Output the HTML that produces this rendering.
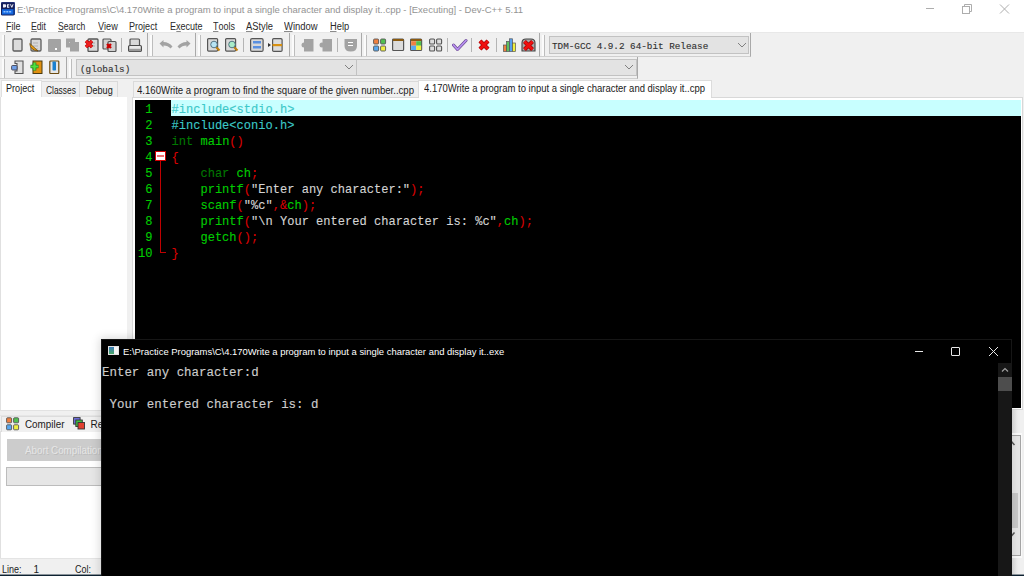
<!DOCTYPE html>
<html><head><meta charset="utf-8">
<style>
*{margin:0;padding:0;box-sizing:border-box}
html,body{width:1024px;height:576px;overflow:hidden;background:#f0f0f0;font-family:"Liberation Sans",sans-serif}
.a{position:absolute}
.t{position:absolute;white-space:pre;transform-origin:0 0}
.mono{font-family:"Liberation Mono",monospace}
#title{left:0;top:0;width:1024px;height:33px;background:#fff}
.menu{font-size:10px;color:#2a2a2a;top:20.8px}
.menu u{text-decoration:none;position:relative}.menu u::after{content:"";position:absolute;left:0;right:0;top:10.4px;height:1px;background:#8a8a8a}
.band{background:#f0f0f0;border-right:1px solid #c8c8c8;border-bottom:1px solid #d4d4d4}
.grip{width:2px;border-left:1px solid #c6c6c6;border-right:1px solid #fff}
.sep{width:1px;background:#c4c4c4}
.ico{position:absolute}
.code{font-family:"Liberation Mono",monospace;font-size:12.05px;line-height:16px;-webkit-text-stroke-width:0.12px}
.ln{position:absolute;left:134px;width:26px;text-align:right;color:#00d000;font-family:"Liberation Mono",monospace;font-size:12.2px}
.code div{height:16px;white-space:pre}
.kw{color:#007800}.g{color:#00cc00}.r{color:#d80000}.s{color:#d4d4d4}
.lnum{color:#00cc00}
.tab{font-size:10px;color:#1a1a1a}
</style></head><body>
<!-- title bar -->
<div id="title" class="a"></div>
<div class="a" style="left:1px;top:2px;width:14px;height:13px;background:linear-gradient(#2c3d8c 0,#2c3d8c 45%,#1060d0 45%,#0a50c0);border-radius:1px"></div>
<div class="t" style="left:17px;top:4px;font-size:9.5px;color:#939393">E:\Practice Programs\C\4.170Write a program to input a single character and display it..cpp - [Executing] - Dev-C++ 5.11</div>

<!-- MENU -->
<div class="t menu" style="left:5.50px;transform:scaleX(0.894)"><u>F</u>ile</div>
<div class="t menu" style="left:30.90px;transform:scaleX(0.867)"><u>E</u>dit</div>
<div class="t menu" style="left:58.10px;transform:scaleX(0.859)"><u>S</u>earch</div>
<div class="t menu" style="left:97.60px;transform:scaleX(0.909)"><u>V</u>iew</div>
<div class="t menu" style="left:128.60px;transform:scaleX(0.906)"><u>P</u>roject</div>
<div class="t menu" style="left:169.60px;transform:scaleX(0.903)">E<u>x</u>ecute</div>
<div class="t menu" style="left:213.10px;transform:scaleX(0.896)"><u>T</u>ools</div>
<div class="t menu" style="left:245.60px;transform:scaleX(0.931)"><u>A</u>Style</div>
<div class="t menu" style="left:283.60px;transform:scaleX(0.946)"><u>W</u>indow</div>
<div class="t menu" style="left:330.10px;transform:scaleX(0.929)"><u>H</u>elp</div>
<!-- /MENU -->

<!-- TB -->
<div class="a" style="left:0;top:32px;width:1024px;height:1px;background:#e8e8e8"></div>
<div class="a" style="left:0px;top:33px;width:148px;height:24px;border-right:1px solid #a9a9a9;border-bottom:1px solid #cfcfcf"></div><div class="a" style="left:2px;top:35px;width:2px;height:21px;background:#fbfbfb"></div><div class="a" style="left:4px;top:35px;width:1px;height:21px;background:#bdbdbd"></div>
<div class="a" style="left:148px;top:33px;width:48px;height:24px;border-right:1px solid #a9a9a9;border-bottom:1px solid #cfcfcf"></div><div class="a" style="left:150px;top:35px;width:2px;height:21px;background:#fbfbfb"></div><div class="a" style="left:152px;top:35px;width:1px;height:21px;background:#bdbdbd"></div>
<div class="a" style="left:196px;top:33px;width:94px;height:24px;border-right:1px solid #a9a9a9;border-bottom:1px solid #cfcfcf"></div><div class="a" style="left:198px;top:35px;width:2px;height:21px;background:#fbfbfb"></div><div class="a" style="left:200px;top:35px;width:1px;height:21px;background:#bdbdbd"></div>
<div class="a" style="left:290px;top:33px;width:72px;height:24px;border-right:1px solid #a9a9a9;border-bottom:1px solid #cfcfcf"></div><div class="a" style="left:292px;top:35px;width:2px;height:21px;background:#fbfbfb"></div><div class="a" style="left:294px;top:35px;width:1px;height:21px;background:#bdbdbd"></div>
<div class="a" style="left:362px;top:33px;width:178px;height:24px;border-right:1px solid #a9a9a9;border-bottom:1px solid #cfcfcf"></div><div class="a" style="left:364px;top:35px;width:2px;height:21px;background:#fbfbfb"></div><div class="a" style="left:366px;top:35px;width:1px;height:21px;background:#bdbdbd"></div>
<div class="a" style="left:540px;top:33px;width:211px;height:24px;border-right:1px solid #a9a9a9;border-bottom:1px solid #cfcfcf"></div><div class="a" style="left:542px;top:35px;width:2px;height:21px;background:#fbfbfb"></div><div class="a" style="left:544px;top:35px;width:1px;height:21px;background:#bdbdbd"></div>
<div class="a" style="left:0px;top:57px;width:67px;height:22px;border-right:1px solid #a9a9a9;border-bottom:1px solid #cfcfcf"></div><div class="a" style="left:2px;top:59px;width:2px;height:19px;background:#fbfbfb"></div><div class="a" style="left:4px;top:59px;width:1px;height:19px;background:#bdbdbd"></div>
<div class="a" style="left:67px;top:57px;width:571px;height:22px;border-right:1px solid #a9a9a9;border-bottom:1px solid #cfcfcf"></div><div class="a" style="left:69px;top:59px;width:2px;height:19px;background:#fbfbfb"></div><div class="a" style="left:71px;top:59px;width:1px;height:19px;background:#bdbdbd"></div>
<div class="a" style="left:121px;top:38px;width:1px;height:14px;background:#b4b4b4"></div>
<div class="a" style="left:243px;top:38px;width:1px;height:14px;background:#b4b4b4"></div>
<div class="a" style="left:337px;top:38px;width:1px;height:14px;background:#b4b4b4"></div>
<div class="a" style="left:447px;top:38px;width:1px;height:14px;background:#b4b4b4"></div>
<div class="a" style="left:471px;top:38px;width:1px;height:14px;background:#b4b4b4"></div>
<div class="a" style="left:496px;top:38px;width:1px;height:14px;background:#b4b4b4"></div>
<svg class="a" style="left:12px;top:38px" width="11" height="14" viewBox="0 0 11 14"><rect x="1" y="1" width="9" height="12" rx="1.2" fill="#dcdcdc" stroke="#5c5c5c" stroke-width="1.3"/></svg>
<svg class="a" style="left:29px;top:38px" width="13" height="14" viewBox="0 0 13 14"><rect x="2" y="1" width="10" height="12" rx="1.2" fill="#d8d8d8" stroke="#5c5c5c" stroke-width="1.3"/><path d="M3 11h6M4 5h5M4 8h5" stroke="#b0b0b0"/><path d="M0.8 5.5 Q1 12 9 13 Z" fill="#f0a010" stroke="#6a4a10" stroke-width="0.8"/></svg>
<svg class="a" style="left:48px;top:38px" width="14" height="14" viewBox="0 0 14 14"><rect x="0" y="1" width="13" height="13" rx="1" fill="#a3a3a3"/><rect x="7" y="10" width="2" height="2" fill="#fff"/></svg>
<svg class="a" style="left:66px;top:38px" width="14" height="14" viewBox="0 0 14 14"><rect x="0" y="0.5" width="9" height="9" fill="#a3a3a3"/><rect x="4" y="4" width="9" height="9.5" fill="#a3a3a3"/><rect x="3" y="4" width="1" height="1" fill="#ccc"/></svg>
<svg class="a" style="left:84px;top:38px" width="15" height="14" viewBox="0 0 15 14"><rect x="4" y="1" width="10" height="12.5" rx="1" fill="#d8d8d8" stroke="#555" stroke-width="1.3"/><path d="M6 5h5M6 8h5" stroke="#aaa"/><path d="M2 3 L8 9 M8 3 L2 9" stroke="#b00" stroke-width="3.4"/><path d="M2 3 L8 9 M8 3 L2 9" stroke="#f02020" stroke-width="2.2"/></svg>
<svg class="a" style="left:102px;top:38px" width="15" height="14" viewBox="0 0 15 14"><rect x="1" y="1" width="8" height="10" rx="1" fill="#d0d0d0" stroke="#555" stroke-width="1.2"/><rect x="6" y="3.5" width="8" height="10" rx="1" fill="#d0d0d0" stroke="#555" stroke-width="1.2"/><path d="M5 6 L9 10 M9 6 L5 10" stroke="#c00" stroke-width="2.4"/></svg>
<svg class="a" style="left:128px;top:38px" width="14" height="14" viewBox="0 0 14 14"><rect x="2" y="1" width="9.5" height="7" rx="1" fill="#d8d8d8" stroke="#555" stroke-width="1.2"/><rect x="0.6" y="7.5" width="12.8" height="6" rx="1.2" fill="#e8e8e8" stroke="#4a4a4a" stroke-width="1.2"/><rect x="1" y="10.8" width="12" height="2.4" fill="#999"/></svg>
<svg class="a" style="left:159px;top:40px" width="14" height="10" viewBox="0 0 14 10"><path d="M0.5 3.5 L4.5 0 L4.5 2 Q10 2 13.5 6.5 L11.5 8.5 Q9 5.5 4.5 5.5 L4.5 7.5 Z" fill="#a3a3a3"/></svg>
<svg class="a" style="left:177px;top:40px" width="14" height="10" viewBox="0 0 14 10"><path d="M13.5 3.5 L9.5 0 L9.5 2 Q4 2 0.5 6.5 L2.5 8.5 Q5 5.5 9.5 5.5 L9.5 7.5 Z" fill="#a3a3a3"/></svg>
<svg class="a" style="left:207px;top:38px" width="14" height="14" viewBox="0 0 14 14"><rect x="0.6" y="0.6" width="10" height="12.5" rx="1" fill="#dadada" stroke="#555" stroke-width="1.2"/><path d="M9 9 L12.5 12.5" stroke="#c08010" stroke-width="2.2"/><circle cx="7" cy="6.5" r="3.3" fill="#b8e4f4" stroke="#4a6a7a" stroke-width="0.9"/></svg>
<svg class="a" style="left:225px;top:38px" width="14" height="14" viewBox="0 0 14 14"><rect x="0.6" y="0.6" width="10" height="12.5" rx="1" fill="#dadada" stroke="#555" stroke-width="1.2"/><path d="M9 9 L12.5 12.5" stroke="#c08010" stroke-width="2.2"/><circle cx="7" cy="6.5" r="3.3" fill="#a8ecc8" stroke="#4a6a7a" stroke-width="0.9"/></svg>
<svg class="a" style="left:250px;top:38px" width="14" height="14" viewBox="0 0 14 14"><rect x="0.6" y="0.6" width="12.5" height="12.8" rx="1.5" fill="#d8d8d8" stroke="#555" stroke-width="1.2"/><rect x="3" y="3" width="8" height="2.5" fill="#5a90e0"/><rect x="3" y="8" width="8" height="2.5" fill="#5a90e0"/></svg>
<svg class="a" style="left:268px;top:38px" width="15" height="14" viewBox="0 0 15 14"><rect x="4.6" y="0.6" width="9.5" height="12.8" rx="1.2" fill="#dcdcdc" stroke="#555" stroke-width="1.2"/><rect x="4.5" y="6" width="9.5" height="2.2" fill="#d89010"/><path d="M0 5 L3 7 L0 9 Z" fill="#333"/></svg>
<svg class="a" style="left:301px;top:38px" width="14" height="14" viewBox="0 0 14 14"><rect x="3" y="1" width="9.5" height="12.5" fill="#a3a3a3"/><circle cx="3" cy="7" r="2.5" fill="#a3a3a3"/></svg>
<svg class="a" style="left:319px;top:38px" width="14" height="14" viewBox="0 0 14 14"><rect x="3.5" y="1" width="9.5" height="12.5" fill="#a3a3a3"/><circle cx="3" cy="7" r="2.5" fill="#a3a3a3"/></svg>
<svg class="a" style="left:344px;top:38px" width="14" height="14" viewBox="0 0 14 14"><path d="M0.5 1 H13 V8 Q13 13.5 6.75 13.5 Q0.5 13.5 0.5 8 Z" fill="#a3a3a3"/><rect x="4" y="4" width="5" height="1" fill="#fff"/><rect x="4" y="7" width="5" height="1" fill="#fff"/></svg>
<svg class="a" style="left:373px;top:38px" width="14" height="14" viewBox="0 0 14 14"><rect x="0.6" y="1" width="5" height="5" rx="1" fill="#f08040" stroke="#555" stroke-width="0.9"/><rect x="7.6" y="1" width="5" height="5" rx="1" fill="#50c050" stroke="#555" stroke-width="0.9"/><rect x="0.6" y="8" width="5" height="5" rx="1" fill="#58a8f0" stroke="#555" stroke-width="0.9"/><rect x="7.6" y="8" width="5" height="5" rx="1" fill="#f0f040" stroke="#555" stroke-width="0.9"/></svg>
<svg class="a" style="left:392px;top:38px" width="13" height="14" viewBox="0 0 13 14"><rect x="0.6" y="1" width="11" height="11.5" rx="1" fill="#dcdcdc" stroke="#555" stroke-width="1.2"/><rect x="1" y="1" width="10.5" height="2" fill="#8a5a10"/></svg>
<svg class="a" style="left:410px;top:38px" width="13" height="14" viewBox="0 0 13 14"><rect x="0.6" y="1" width="11" height="11.5" rx="1" fill="#dcdcdc" stroke="#555" stroke-width="1.2"/><rect x="1" y="1" width="10.5" height="2" fill="#8a5a10"/><rect x="1.2" y="3.2" width="5" height="4.5" fill="#f08040"/><rect x="6.2" y="3.2" width="5" height="4.5" fill="#50c050"/><rect x="1.2" y="7.7" width="5" height="4.3" fill="#58a8f0"/><rect x="6.2" y="7.7" width="5" height="4.3" fill="#f0f040"/></svg>
<svg class="a" style="left:429px;top:38px" width="14" height="14" viewBox="0 0 14 14"><rect x="0.6" y="1" width="5" height="5" rx="1" fill="#ddd" stroke="#555" stroke-width="1.1"/><rect x="7.6" y="1" width="5" height="5" rx="1" fill="#ddd" stroke="#555" stroke-width="1.1"/><rect x="0.6" y="8" width="5" height="5" rx="1" fill="#ddd" stroke="#555" stroke-width="1.1"/><rect x="7.6" y="8" width="5" height="5" rx="1" fill="#ddd" stroke="#555" stroke-width="1.1"/></svg>
<svg class="a" style="left:452px;top:38px" width="16" height="14" viewBox="0 0 16 14"><path d="M1.5 7 L5.5 11.5 L14 2.5" stroke="#6a4a90" stroke-width="3" fill="none" stroke-linejoin="round" stroke-linecap="round"/><path d="M1.5 7 L5.5 11.5 L14 2.5" stroke="#b890f0" stroke-width="1.8" fill="none" stroke-linejoin="round" stroke-linecap="round"/></svg>
<svg class="a" style="left:477px;top:38px" width="14" height="14" viewBox="0 0 14 14"><path d="M3 3 L11 11 M11 3 L3 11" stroke="#900" stroke-width="4.2"/><path d="M3 3 L11 11 M11 3 L3 11" stroke="#f01010" stroke-width="3"/></svg>
<svg class="a" style="left:503px;top:38px" width="14" height="14" viewBox="0 0 14 14"><rect x="0.5" y="7" width="3" height="6.5" fill="#f08040" stroke="#555" stroke-width="0.7"/><rect x="3.5" y="3.5" width="3" height="10" fill="#60c060" stroke="#555" stroke-width="0.7"/><rect x="6.5" y="0.8" width="3" height="12.7" fill="#58a0f0" stroke="#555" stroke-width="0.7"/><rect x="9.5" y="5" width="3" height="8.5" fill="#f0f040" stroke="#555" stroke-width="0.7"/></svg>
<svg class="a" style="left:521px;top:38px" width="15" height="14" viewBox="0 0 15 14"><path d="M1 13 V5 Q1 1 5 1 H10 Q14 1 14 5 V13 Z" fill="#aaa" stroke="#444" stroke-width="1.1"/><path d="M3.5 3.5 L11.5 11.5 M11.5 3.5 L3.5 11.5" stroke="#900" stroke-width="4"/><path d="M3.5 3.5 L11.5 11.5 M11.5 3.5 L3.5 11.5" stroke="#f01010" stroke-width="2.8"/></svg>
<div class="a" style="left:549px;top:36px;width:200px;height:18px;background:#e3e3e3;border:1px solid #c2c2c2"></div>
<div class="t mono" id="tdm" style="left:552px;top:41px;font-size:9.3px;font-weight:normal;color:#2a2a2a;-webkit-text-stroke:0.15px #555">TDM-GCC 4.9.2 64-bit Release</div>
<svg class="a" style="left:737px;top:42px" width="10" height="6" viewBox="0 0 10 6"><path d="M1 1 L5 5 L9 1" stroke="#808080" stroke-width="1" fill="none"/></svg>
<svg class="a" style="left:11px;top:60px" width="13" height="14" viewBox="0 0 13 14"><path d="M4 1 H12 V13.5 H4 V11 H6 V3.5 H4 Z" fill="#e0e0e0" stroke="#555" stroke-width="1.1"/><rect x="0.6" y="5.5" width="5.5" height="4.5" rx="1" fill="#70a0e8" stroke="#445" stroke-width="0.9"/></svg>
<svg class="a" style="left:29px;top:60px" width="14" height="14" viewBox="0 0 14 14"><rect x="4" y="1" width="9" height="12.5" fill="#e09010" stroke="#4a3a10" stroke-width="1"/><path d="M5.5 2.5 V10.5 M1.5 6.5 H9.5" stroke="#208020" stroke-width="3.6"/><path d="M5.5 2.8 V10.2 M1.8 6.5 H9.2" stroke="#50e040" stroke-width="2.2"/></svg>
<svg class="a" style="left:49px;top:60px" width="11" height="14" viewBox="0 0 11 14"><rect x="0.8" y="1" width="9" height="12.5" rx="0.8" fill="#e6e6e6" stroke="#6a4a10" stroke-width="1.2"/><rect x="3.5" y="1.5" width="3.5" height="9" rx="0.8" fill="#1a80d0"/></svg>
<div class="a" style="left:76px;top:59px;width:281px;height:17px;background:#e3e3e3;border:1px solid #c2c2c2"></div>
<div class="t mono" id="glob" style="left:80px;top:63.5px;font-size:9.3px;font-weight:normal;color:#2a2a2a;-webkit-text-stroke:0.15px #555">(globals)</div>
<svg class="a" style="left:344px;top:64px" width="10" height="6" viewBox="0 0 10 6"><path d="M1 1 L5 5 L9 1" stroke="#808080" stroke-width="1" fill="none"/></svg>
<div class="a" style="left:356px;top:59px;width:281px;height:17px;background:#e3e3e3;border:1px solid #c2c2c2"></div>
<svg class="a" style="left:624px;top:64px" width="10" height="6" viewBox="0 0 10 6"><path d="M1 1 L5 5 L9 1" stroke="#808080" stroke-width="1" fill="none"/></svg>
<div class="a" style="left:41px;top:81px;width:39px;height:17px;background:#f0f0f0;border:1px solid #dadada;border-bottom:none"></div>
<div class="a" style="left:80px;top:81px;width:38px;height:17px;background:#f0f0f0;border:1px solid #dadada;border-bottom:none;border-left:none"></div>
<div class="a" style="left:1px;top:80px;width:41px;height:18px;background:#fff;border:1px solid #e0e0e0;border-bottom:none"></div>
<div class="t tab" style="left:6.3px;top:82.9px;transform:scaleX(.909)">Project</div>
<div class="t tab" style="left:46px;top:84.6px;transform:scaleX(.84)">Classes</div>
<div class="t tab" style="left:86px;top:84.6px;transform:scaleX(.906)">Debug</div>
<div class="a" style="left:133px;top:81px;width:286px;height:17px;background:#f0f0f0;border:1px solid #dadada;border-bottom:none"></div>
<div class="a" style="left:418px;top:80px;width:294px;height:19px;background:#fff;border:1px solid #dcdcdc;border-bottom:none"></div>
<div class="t tab" id="tab1" style="left:137.3px;top:84.6px;transform:scaleX(.959)">4.160Write a program to find the square of the given number..cpp</div>
<div class="t tab" id="tab2" style="left:423.6px;top:82.8px;transform:scaleX(.947)">4.170Write a program to input a single character and display it..cpp</div>
<!-- /TB -->

<!-- tabs row, left panel -->
<div class="a" style="left:0;top:97px;width:127px;height:313px;background:#fff;border-left:1px solid #e0e0e0"></div>

<!-- editor -->
<div class="a" style="left:132px;top:97px;width:891px;height:313px;background:#fff;border:1px solid #d8d8d8"></div>
<div class="a" style="left:135px;top:100px;width:886px;height:308px;background:#000"></div>
<div class="a" style="left:171px;top:100px;width:850px;height:16px;background:#c8ffff"></div>
<div class="a" style="left:419px;top:96px;width:292px;height:4px;background:#fff"></div>


<!-- code -->
<div class="a code" style="left:171.5px;top:102px">
<div style="color:#3cc8c8">#include&lt;stdio.h&gt;</div>
<div style="color:#3cc8c8">#include&lt;conio.h&gt;</div>
<div><span class="kw">int</span> <span class="g">main</span><span class="r">()</span></div>
<div><span class="r">{</span></div>
<div>    <span class="kw">char</span> <span class="g">ch</span><span class="r">;</span></div>
<div>    <span class="g">printf</span><span class="r">(</span><span class="s">"Enter any character:"</span><span class="r">);</span></div>
<div>    <span class="g">scanf</span><span class="r">(</span><span class="s">"%c"</span><span class="r">,&amp;</span><span class="g">ch</span><span class="r">);</span></div>
<div>    <span class="g">printf</span><span class="r">(</span><span class="s">"\n Your entered character is: %c"</span><span class="r">,</span><span class="g">ch</span><span class="r">);</span></div>
<div>    <span class="g">getch</span><span class="r">();</span></div>
<div><span class="r">}</span></div>
</div>
<div class="a code lnum" style="left:134px;top:102px;width:18.5px;text-align:right">
<div>1</div><div>2</div><div>3</div><div>4</div><div>5</div><div>6</div><div>7</div><div>8</div><div>9</div><div>10</div>
</div>
<!-- fold -->
<div class="a" style="left:155px;top:151px;width:11px;height:10px;background:#fff;border:1px solid #d00000"></div>
<div class="a" style="left:157px;top:155px;width:7px;height:2px;background:#f07070"></div>
<div class="a" style="left:160px;top:161px;width:1px;height:92px;background:#c00000"></div>
<div class="a" style="left:160px;top:252px;width:6px;height:1px;background:#c00000"></div>

<!-- bottom panel -->
<div class="a" style="left:0;top:431px;width:1012px;height:128px;background:#fff;border-left:1px solid #e0e0e0"></div>
<div class="a" style="left:0;top:574px;width:1024px;height:2px;background:#1d3644"></div>

<!-- EX -->
<div class="a" style="left:0;top:410px;width:127px;height:1px;background:#e2e2e2"></div>
<div class="a" style="left:0;top:415px;width:1012px;height:1px;background:#e6e6e6"></div>
<div class="a" style="left:1px;top:416px;width:67px;height:16px;background:#f0f0f0;border:1px solid #dcdcdc;border-bottom:none"></div>
<div class="a" style="left:67px;top:416px;width:40px;height:16px;background:#f0f0f0;border:1px solid #dcdcdc;border-bottom:none;border-left:none"></div>
<svg class="a" style="left:6px;top:417px" width="14" height="14" viewBox="0 0 14 14"><rect x="0.6" y="0.8" width="5" height="5" rx="0.8" fill="#f08040" stroke="#555" stroke-width="0.9"/><rect x="7.6" y="0.8" width="5" height="5" rx="0.8" fill="#50c050" stroke="#555" stroke-width="0.9"/><rect x="0.6" y="7.8" width="5" height="5" rx="0.8" fill="#58a8f0" stroke="#555" stroke-width="0.9"/><rect x="7.6" y="7.8" width="5" height="5" rx="0.8" fill="#f0f040" stroke="#555" stroke-width="0.9"/></svg>
<div class="t tab" id="comp" style="left:24.5px;top:419px;transform:scaleX(.985)">Compiler</div>
<svg class="a" style="left:73px;top:417px" width="13" height="14" viewBox="0 0 13 14"><rect x="0.6" y="0.6" width="6.5" height="6.5" fill="#7070e0" stroke="#333" stroke-width="0.9"/><rect x="2.8" y="3" width="6.5" height="6.5" fill="#40c040" stroke="#333" stroke-width="0.9"/><rect x="5" y="5.5" width="6.5" height="6.5" fill="#e04030" stroke="#333" stroke-width="0.9"/></svg>
<div class="t tab" style="left:90.5px;top:419px">Resources</div>
<div class="a" style="left:7px;top:439px;width:100px;height:22px;background:#cccccc"></div>
<div class="t" style="left:25px;top:444.5px;font-size:10.2px;color:#e6e6e6;text-shadow:1px 1px 0 #bcbcbc;transform:scaleX(.96)">Abort Compilation</div>
<div class="a" style="left:6px;top:467px;width:100px;height:19px;background:#e6e6e6;border:1px solid #bcbcbc"></div>
<div class="a" style="left:0;top:558px;width:1024px;height:1px;background:#e4e4e4"></div>
<div class="t tab" style="left:1.8px;top:564.2px;transform:scaleX(.9)">Line:</div>
<div class="t tab" style="left:33.5px;top:564.2px">1</div>
<div class="t tab" style="left:75px;top:564.2px;transform:scaleX(.9)">Col:</div>
<div class="a" style="left:0;top:574px;width:1024px;height:1px;background:#8a939a"></div>
<div class="a" style="left:0;top:575px;width:1024px;height:1px;background:#0e2232"></div>
<div class="a" style="left:270px;top:575px;width:29px;height:1px;background:#1a70b0"></div>
<div class="a" style="left:1012px;top:410px;width:12px;height:164px;background:linear-gradient(90deg,#dedede,#f0f0f0 6px)"></div>
<div class="a" style="left:1000px;top:433px;width:22px;height:125px;background:#fafafa"></div>
<div class="a" style="left:1000px;top:435px;width:21px;height:121px;background:#e6e6e6;border:1px solid #a4a4a4"></div>
<div class="a" style="left:1001px;top:493px;width:17px;height:35px;background:#c8c8c8"></div>
<svg class="a" style="left:1003px;top:439px" width="13" height="8" viewBox="0 0 13 8"><path d="M3.5 6 L7.5 1.5 L11.5 6" stroke="#555" stroke-width="1.5" fill="none"/></svg>
<svg class="a" style="left:1003px;top:531px" width="13" height="8" viewBox="0 0 13 8"><path d="M3.5 1.5 L7.5 6 L11.5 1.5" stroke="#555" stroke-width="1.5" fill="none"/></svg>
<div class="a" style="left:926px;top:8px;width:8px;height:1px;background:#adadad"></div>
<svg class="a" style="left:961px;top:3px" width="12" height="11" viewBox="0 0 12 11"><rect x="1.5" y="3.5" width="7" height="7" fill="none" stroke="#adadad"/><path d="M3.5 3.5 V1.5 H10.5 V8.5 H8.5" fill="none" stroke="#adadad"/></svg>
<svg class="a" style="left:999px;top:4px" width="11" height="10" viewBox="0 0 11 10"><path d="M1 0.5 L10 9.5 M10 0.5 L1 9.5" stroke="#adadad" stroke-width="1"/></svg>
<svg class="a" style="left:1px;top:2px" width="14" height="14" viewBox="0 0 14 14"><rect x="0" y="0.5" width="13.5" height="13" rx="1.5" fill="#16205a"/><rect x="1" y="7.2" width="11.5" height="5.3" fill="#1468e0"/><path d="M2 2.2 h2 q1.2 0 1.2 1.3 v0.6 q0 1.3 -1.2 1.3 h-2 z M6 2.2 h2.3 v0.9 h-1.3 v0.5 h1.2 v0.8 h-1.2 v0.5 h1.3 v0.8 h-2.3 z M9 2.2 h1 l0.8 2.2 l0.8 -2.2 h1 l-1.3 3.2 h-1 z" fill="#f0f0f8"/><path d="M2.5 9.8 h8.5" stroke="#8cc0ff" stroke-width="1.6" stroke-dasharray="2 0.8"/></svg>
<!-- /EX -->
<!-- console -->
<div class="a" style="left:101px;top:339px;width:911px;height:240px;background:#000;border:1px solid #161616;border-bottom:none;box-shadow:-1px -1px 9px rgba(0,0,0,0.16)"></div>
<!-- console icon -->
<div class="a" style="left:108px;top:346px;width:11px;height:9px;background:#f4f4f4;border:1px solid #e0e0e0"></div>
<div class="a" style="left:109px;top:347px;width:5px;height:7px;background:linear-gradient(#3a78b8,#4aa868)"></div>
<div id="ctitle" class="t" style="left:123px;top:346px;font-size:9.45px;color:#fff">E:\Practice Programs\C\4.170Write a program to input a single character and display it..exe</div>
<div class="t mono" id="ctext" style="left:102px;top:365px;font-size:12.45px;line-height:16px;color:#cccccc;-webkit-text-stroke-width:0.15px">Enter any character:d

 Your entered character is: d</div>
<!-- console buttons -->
<div class="a" style="left:915px;top:351px;width:8px;height:1px;background:#e8e8e8"></div>
<div class="a" style="left:951px;top:347px;width:9px;height:9px;border:1px solid #e8e8e8;border-radius:1px"></div>
<svg class="a" style="left:988px;top:346px" width="11" height="11"><path d="M1 1L10 10M10 1L1 10" stroke="#e8e8e8" stroke-width="1"/></svg>
<!-- console scrollbar -->
<div class="a" style="left:998px;top:363px;width:14px;height:213px;background:#171717"></div>
<div class="a" style="left:998px;top:377px;width:14px;height:14px;background:#4d4d4d"></div>
<svg class="a" style="left:998px;top:363px" width="14" height="14"><path d="M4 8.5L7 5.5L10 8.5" stroke="#a0a0a0" stroke-width="1.2" fill="none"/></svg>


</body></html>
